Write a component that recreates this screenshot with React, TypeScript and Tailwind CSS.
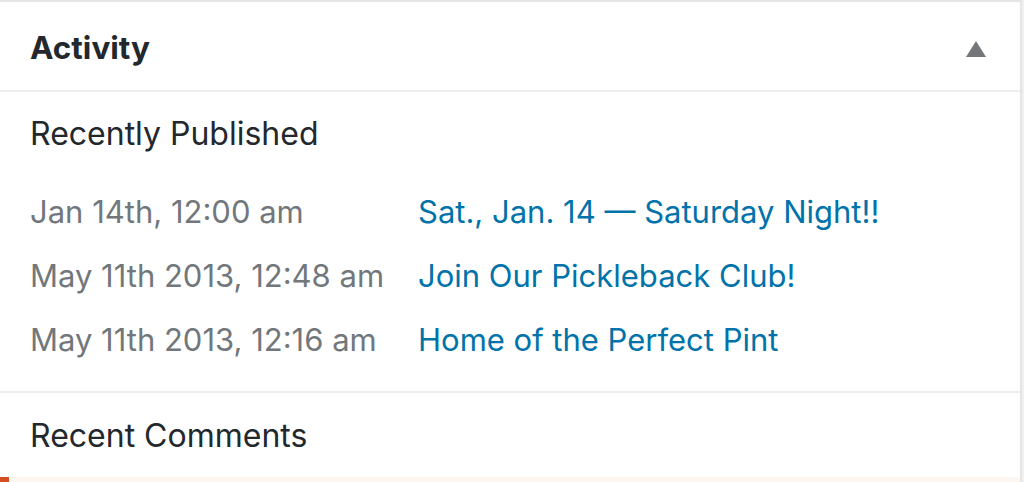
import React from 'react';

const posts = [
  { date: 'Jan 14th, 12:00 am', title: 'Sat., Jan. 14 \u2014 Saturday Night!!' },
  { date: 'May 11th 2013, 12:48 am', title: 'Join Our Pickleback Club!' },
  { date: 'May 11th 2013, 12:16 am', title: 'Home of the Perfect Pint' },
];

export default function App() {
  return (
    <div
      className="w-[1024px] h-[482px] overflow-hidden bg-[#f1f1f1]"
      style={{ fontFamily: 'Inter, "Noto Sans", sans-serif' }}
    >
      <div className="w-[1022px] h-full bg-white border-t-2 border-r-2 border-[#e5e5e5] flex flex-col">
        {/* Widget header */}
        <div className="h-[90px] shrink-0 border-b-2 border-[#eeeeee] flex items-center justify-between pl-[30px] pr-[34px]">
          <h2 className="text-[31.5px] font-bold text-[#23282d] leading-none mt-[4px]">Activity</h2>
          <svg width="20" height="16" viewBox="0 0 20 16" className="mt-[6px]">
            <polygon points="10,0 20,16 0,16" fill="#72777c" />
          </svg>
        </div>

        {/* Recently Published */}
        <div className="shrink-0 pl-[30px] pt-[22px] pb-[19px] border-b-2 border-[#eeeeee]">
          <h3 className="text-[32px] leading-[40px] text-[#23282d]">Recently Published</h3>
          <ul className="mt-[26px]">
            {posts.map((p) => (
              <li key={p.title} className="flex h-[64px] items-center text-[31px]">
                <span className="w-[388px] shrink-0 text-[#72777c]">{p.date}</span>
                <a className="text-[#0073aa]">{p.title}</a>
              </li>
            ))}
          </ul>
        </div>

        {/* Recent Comments */}
        <div className="shrink-0 pl-[30px] pt-[23px] pb-[21px]">
          <h3 className="text-[32px] leading-[40px] text-[#23282d]">Recent Comments</h3>
        </div>
        <div className="flex-1 bg-[#fef7f1] border-l-[9px] border-[#d54e21]" />
      </div>
    </div>
  );
}
